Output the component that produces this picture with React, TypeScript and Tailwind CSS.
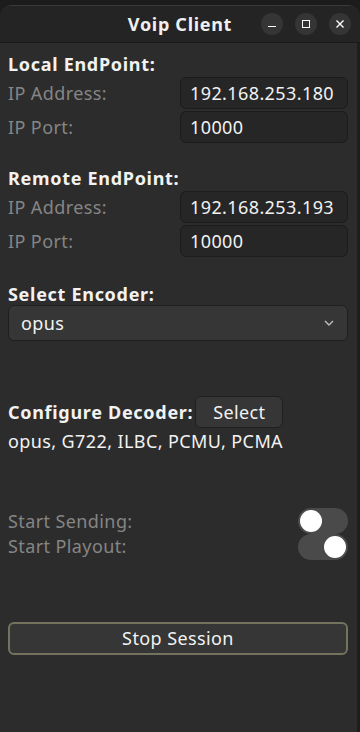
import React from 'react';

const font = { fontFamily: '"Noto Sans", "Open Sans", sans-serif' };

function Field({ label, value }: { label: string; value: string }) {
    return (
        <div className="flex items-center h-[34px]">
            <span className="flex-1 text-[18px] tracking-[0.4px] text-[#858585]">{label}</span>
            <div className="w-[168px] h-[32px] rounded-[6px] bg-[#262626] border border-[#1c1c1c] flex items-center px-[9px] text-[18px] tracking-[0.4px] text-[#f2f2f2]">
                {value}
            </div>
        </div>
    );
}

function Toggle({ on }: { on: boolean }) {
    return (
        <div className={`w-[50px] h-[26px] rounded-full bg-[#4a4a4a] flex items-center px-[2px] ${on ? 'justify-end' : 'justify-start'}`}>
            <div className="w-[22px] h-[22px] rounded-full bg-white" />
        </div>
    );
}

export default function App() {
    return (
        <div className="w-[360px] h-[732px] bg-[#1c1c1c] pt-[5px] overflow-hidden tracking-[0.4px]" style={font}>
            <div className="h-[727px] flex flex-col rounded-t-[12px] overflow-hidden border-t border-[#3a3a3a]">
                {/* Title bar */}
                <div className="h-[37px] bg-[#242424] border-b border-[#1a1a1a] flex items-center relative shrink-0">
                    <span className="absolute inset-x-0 top-[5px] text-center text-[18px] font-bold tracking-[0.7px] text-[#f0f0f0]">Voip Client</span>
                    <div className="ml-auto flex gap-[12px] pr-[9px] relative">
                        <div className="w-[22px] h-[22px] rounded-full bg-[#353535] flex items-center justify-center">
                            <div className="w-[8px] h-[1.5px] bg-white mt-[5px]" />
                        </div>
                        <div className="w-[22px] h-[22px] rounded-full bg-[#353535] flex items-center justify-center">
                            <div className="w-[8px] h-[8px] border-[1.5px] border-white" />
                        </div>
                        <div className="w-[22px] h-[22px] rounded-full bg-[#353535] flex items-center justify-center">
                            <svg width="10" height="10" viewBox="0 0 10 10">
                                <path d="M1.5 1.5 L8.5 8.5 M8.5 1.5 L1.5 8.5" stroke="white" strokeWidth="1.4" />
                            </svg>
                        </div>
                    </div>
                </div>

                <div className="flex-1 flex">
                    <div className="flex-1 bg-[#2c2c2c] flex flex-col pl-[8px] pr-[9px] pt-[9px]">
                        <div className="text-[18px] font-bold tracking-[0.7px] text-[#f2f2f2] leading-[24px]">Local EndPoint:</div>
                        <Field label="IP Address:" value="192.168.253.180" />
                        <Field label="IP Port:" value="10000" />

                        <div className="text-[18px] font-bold tracking-[0.7px] text-[#f2f2f2] leading-[24px] mt-[22px]">Remote EndPoint:</div>
                        <Field label="IP Address:" value="192.168.253.193" />
                        <Field label="IP Port:" value="10000" />

                        <div className="text-[18px] font-bold tracking-[0.7px] text-[#f2f2f2] leading-[22px] mt-[25px]">Select Encoder:</div>
                        <div className="h-[36px] rounded-[6px] bg-[#363636] border border-[#1f1f1f] flex items-center pl-[12px] pr-[12px] text-[18px] text-[#f2f2f2]">
                            <span className="flex-1">opus</span>
                            <svg width="12" height="8" viewBox="0 0 12 8">
                                <path d="M2 2 L6 6 L10 2" stroke="#bdbdbd" strokeWidth="1.4" fill="none" />
                            </svg>
                        </div>

                        <div className="flex items-center mt-[55px] h-[32px]">
                            <span className="text-[18px] font-bold tracking-[0.7px] text-[#f2f2f2]">Configure Decoder:</span>
                            <div className="ml-[2px] w-[88px] h-[32px] rounded-[6px] bg-[#363636] border border-[#1f1f1f] flex items-center justify-center text-[18px] text-[#f2f2f2]">
                                Select
                            </div>
                        </div>
                        <div className="text-[18px] text-[#f2f2f2] leading-[26px]">opus, G722, ILBC, PCMU, PCMA</div>

                        <div className="flex mt-[54px]">
                            <div className="flex-1 flex flex-col justify-center">
                                <span className="text-[18px] text-[#858585] leading-[25px]">Start Sending:</span>
                                <span className="text-[18px] text-[#858585] leading-[25px]">Start Playout:</span>
                            </div>
                            <div className="flex flex-col">
                                <Toggle on={false} />
                                <Toggle on={true} />
                            </div>
                        </div>

                        <div className="mt-[62px] h-[33px] rounded-[6px] bg-[#363636] border-2 border-[#74735e] flex items-center justify-center text-[18px] text-[#f2f2f2]">
                            Stop Session
                        </div>
                    </div>
                    <div className="w-[3px] bg-[#1e1e1e]" />
                </div>
            </div>
        </div>
    );
}
